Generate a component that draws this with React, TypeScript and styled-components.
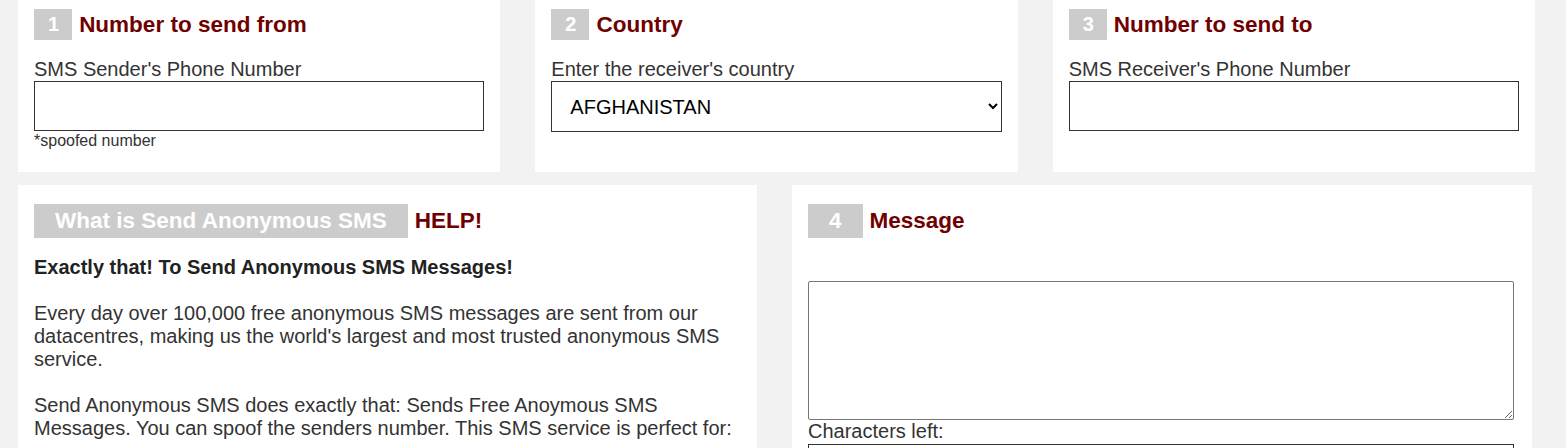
import React from 'react';
import styled, {createGlobalStyle} from 'styled-components';

const colors = {
    page: '#f2f2f2',
    panel: '#ffffff',
    badge: '#cccccc',
    maroon: '#700000',
    text: '#333333',
    field: '#333333',
};

const GlobalStyle = createGlobalStyle`
  html, body {
    margin: 0;
    padding: 0;
    background: ${colors.page};
    font-family: "Liberation Sans", Arial, sans-serif;
    color: ${colors.text};
  }
`;

const StepHeader: React.FC<{step: string; title: string; wide?: boolean}> = ({step, title, wide}) => (
    <Header>
        <Badge $wide={wide}>{step}</Badge>
        <Title>{title}</Title>
    </Header>
);

export default function App() {
    return (
        <>
            <GlobalStyle/>
            <Page>
                <TopRow>
                    <SmallPanel>
                        <StepHeader step="1" title="Number to send from"/>
                        <Label>SMS Sender's Phone Number</Label>
                        <TextField type="text"/>
                        <Hint>*spoofed number</Hint>
                    </SmallPanel>
                    <SmallPanel>
                        <StepHeader step="2" title="Country"/>
                        <Label>Enter the receiver's country</Label>
                        <Select defaultValue="AF">
                            <option value="AF">AFGHANISTAN</option>
                            <option value="AL">ALBANIA</option>
                            <option value="DZ">ALGERIA</option>
                        </Select>
                    </SmallPanel>
                    <SmallPanel>
                        <StepHeader step="3" title="Number to send to"/>
                        <Label>SMS Receiver's Phone Number</Label>
                        <TextField type="text"/>
                    </SmallPanel>
                </TopRow>
                <BottomRow>
                    <BigPanel>
                        <Header>
                            <Badge $wide>What is Send Anonymous SMS</Badge>
                            <Title>HELP!</Title>
                        </Header>
                        <Lead>Exactly that! To Send Anonymous SMS Messages!</Lead>
                        <Paragraph>
                            Every day over 100,000 free anonymous SMS messages are sent from our datacentres,
                            making us the world's largest and most trusted anonymous SMS service.
                        </Paragraph>
                        <Paragraph>
                            Send Anonymous SMS does exactly that: Sends Free Anoymous SMS Messages. You can spoof
                            the senders number. This SMS service is perfect for:
                        </Paragraph>
                    </BigPanel>
                    <BigPanel>
                        <StepHeader step="4" title="Message" wide/>
                        <MessageArea/>
                        <Counter>Characters left:</Counter>
                        <CounterField type="text" readOnly/>
                    </BigPanel>
                </BottomRow>
            </Page>
        </>
    );
}

const Page = styled.div`
  width: 1517px;
  padding-left: 18px;
  display: flex;
  flex-direction: column;
  gap: 13px;
`;

const TopRow = styled.div`
  display: grid;
  grid-template-columns: repeat(3, 1fr);
  column-gap: 35px;
`;

const BottomRow = styled.div`
  display: grid;
  grid-template-columns: 739px 740px;
  column-gap: 35px;
`;

const SmallPanel = styled.section`
  background: ${colors.panel};
  height: 172px;
  box-sizing: border-box;
  padding: 9px 16px 0;
  display: flex;
  flex-direction: column;
`;

const BigPanel = styled.section`
  background: ${colors.panel};
  height: 300px;
  box-sizing: border-box;
  padding: 19px 16px 0;
  display: flex;
  flex-direction: column;
`;

const Header = styled.div`
  display: flex;
  align-items: center;
  gap: 7px;
`;

const Badge = styled.span<{ $wide?: boolean }>`
  background: ${colors.badge};
  color: #fff;
  font-weight: bold;
  font-size: ${p => (p.$wide ? '22.5px' : '20px')};
  height: ${p => (p.$wide ? '34px' : '31px')};
  line-height: ${p => (p.$wide ? '34px' : '31px')};
  padding: ${p => (p.$wide ? '0 21px' : '0 13px 0 14px')};
  white-space: nowrap;
`;

const Title = styled.h2`
  margin: 0;
  color: ${colors.maroon};
  font-size: 22.5px;
  font-weight: bold;
`;

const Label = styled.label`
  display: block;
  margin-top: 18px;
  font-size: 20px;
  line-height: 23px;
`;

const TextField = styled.input`
  box-sizing: border-box;
  width: 100%;
  height: 50px;
  border: 1px solid ${colors.field};
  border-radius: 0;
  margin: 0;
  padding: 0 14px;
  font-family: inherit;
  font-size: 20px;
  outline: none;
`;

const Select = styled.select`
  box-sizing: border-box;
  width: 100%;
  height: 51px;
  border: 1px solid ${colors.field};
  border-radius: 0;
  background: #fff;
  margin: 0;
  padding: 0 10px 0 14px;
  font-family: inherit;
  font-size: 20px;
  color: #000;
`;

const Hint = styled.div`
  margin-top: 1px;
  font-size: 16px;
  line-height: 18px;
`;

const Lead = styled.p`
  margin: 18px 0 0;
  font-size: 20px;
  font-weight: bold;
  line-height: 23px;
  color: #222;
`;

const Paragraph = styled.p`
  margin: 23px 0 0;
  font-size: 20px;
  line-height: 23px;
`;

const MessageArea = styled.textarea`
  display: block;
  box-sizing: border-box;
  width: 706px;
  height: 139px;
  margin-top: 43px;
  border: 1px solid #767676;
  border-radius: 2px;
  font-family: inherit;
  font-size: 18px;
`;

const Counter = styled.div`
  font-size: 20px;
  line-height: 23px;
`;

const CounterField = styled.input`
  box-sizing: border-box;
  width: 706px;
  height: 40px;
  margin: 1px 0 0;
  border: 1px solid ${colors.field};
  border-radius: 0;
`;
